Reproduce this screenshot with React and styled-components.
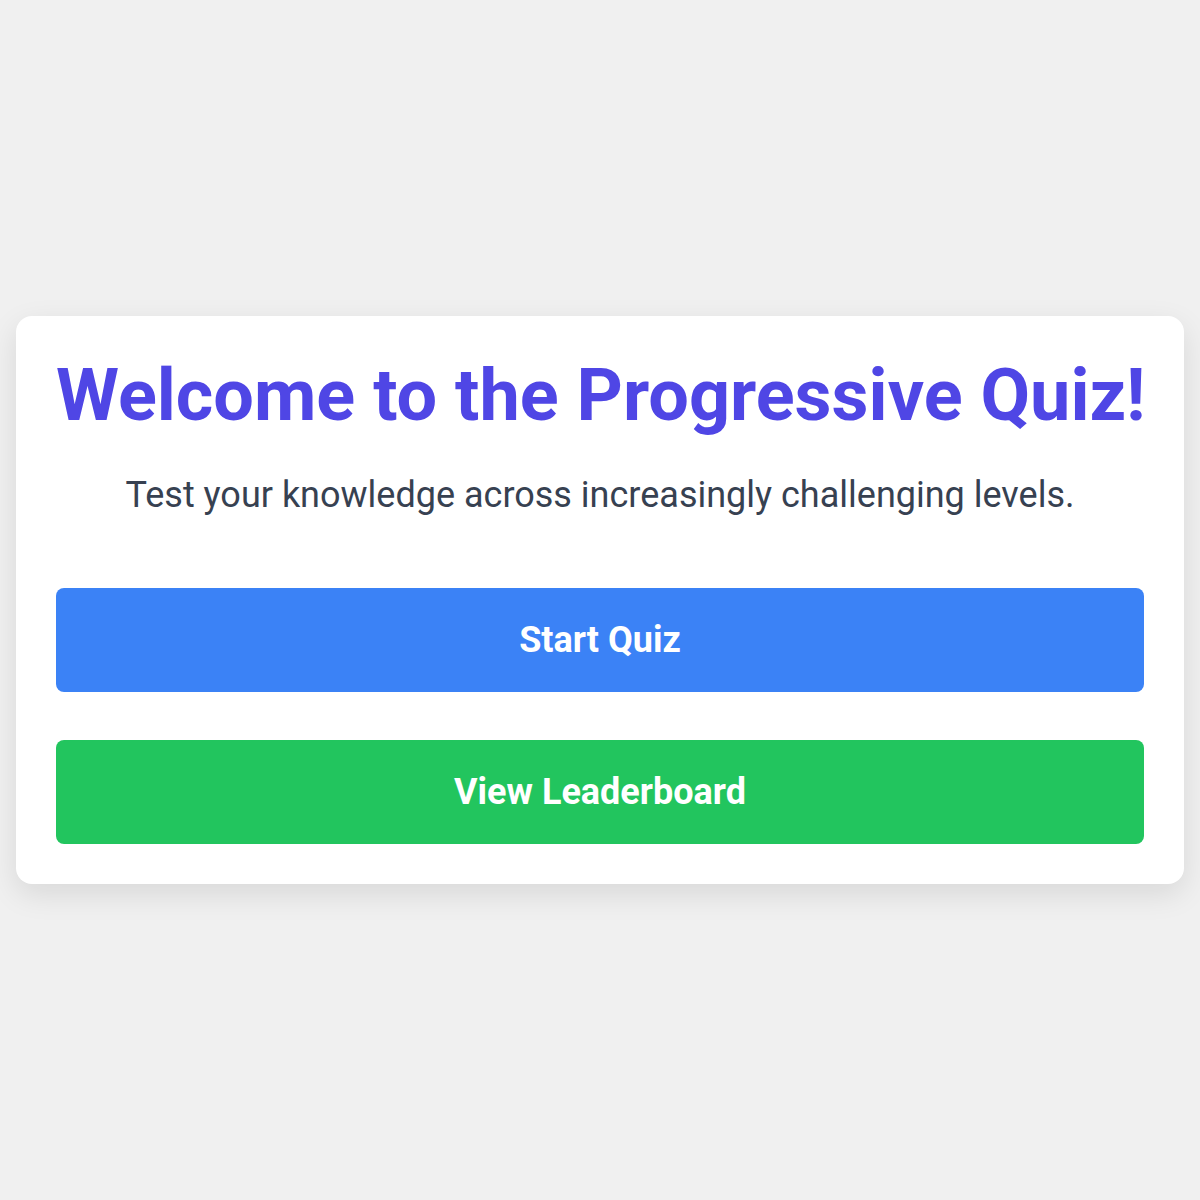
import React from "react";
import styled, { createGlobalStyle } from "styled-components";

const GlobalStyle = createGlobalStyle`
  * { box-sizing: border-box; }
  html, body { margin: 0; padding: 0; }
  body {
    background: #f0f0f0;
    font-family: Roboto, "Liberation Sans", Arial, sans-serif;
  }
`;

const Page = styled.main`
  min-height: 100vh;
  display: flex;
  align-items: center;
  justify-content: center;
  padding: 16px;
`;

const Card = styled.section`
  width: 100%;
  background: #ffffff;
  border-radius: 16px;
  box-shadow: 0 10px 30px rgba(0, 0, 0, 0.1);
  padding: 40px;
  display: flex;
  flex-direction: column;
  text-align: center;
`;

const Title = styled.h1`
  margin: 0 0 32px;
  font-size: 72px;
  line-height: 1.1;
  font-weight: 700;
  color: #4f46e5;
  white-space: nowrap;
`;

const Subtitle = styled.p`
  margin: 0 0 64px;
  font-size: 36px;
  line-height: 1.6;
  color: #374151;
`;

const Actions = styled.div`
  display: flex;
  flex-direction: column;
  gap: 48px;
`;

const ActionButton = styled.button`
  height: 104px;
  border: none;
  border-radius: 8px;
  background: ${(p) => (p.$variant === "green" ? "#22c55e" : "#3b82f6")};
  color: #ffffff;
  font-family: inherit;
  font-size: 36px;
  font-weight: 700;
  cursor: pointer;
`;

export default function App() {
  return (
    <>
      <GlobalStyle />
      <Page>
        <Card>
          <Title>Welcome to the Progressive Quiz!</Title>
          <Subtitle>Test your knowledge across increasingly challenging levels.</Subtitle>
          <Actions>
            <ActionButton $variant="blue">Start Quiz</ActionButton>
            <ActionButton $variant="green">View Leaderboard</ActionButton>
          </Actions>
        </Card>
      </Page>
    </>
  );
}
